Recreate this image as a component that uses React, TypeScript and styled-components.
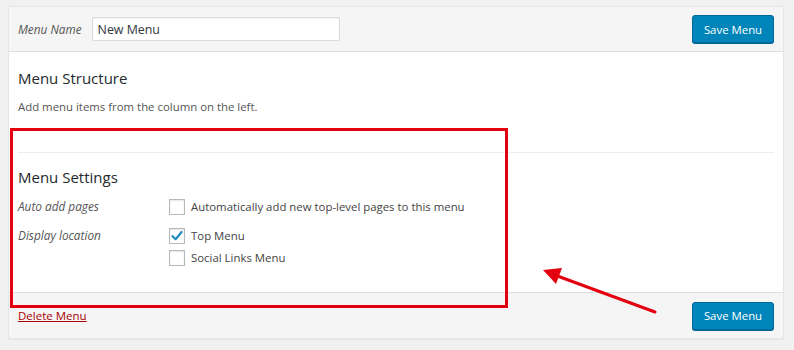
import React from "react";
import styled, { createGlobalStyle } from "styled-components";

const Global = createGlobalStyle`
  html, body { margin: 0; padding: 0; background: #f1f1f1; }
  body { font-family: "Open Sans", "Noto Sans", sans-serif; color: #23282d; font-size: 13px; }
`;

const Page = styled.div`
  position: relative;
  width: 794px;
  height: 350px;
  padding: 6px 10px 0 8px;
  box-sizing: border-box;
`;

const Panel = styled.div`
  border: 1px solid #e5e5e5;
  background: #fff;
  box-shadow: 0 1px 1px rgba(0,0,0,0.04);
  display: flex;
  flex-direction: column;
`;

const Bar = styled.div<{ $top?: boolean }>`
  background: #f5f5f5;
  display: flex;
  align-items: center;
  justify-content: space-between;
  padding: 0 9px;
  height: ${(p) => (p.$top ? "44px" : "45px")};
  border-${(p) => (p.$top ? "bottom" : "top")}: 1px solid #dedede;
`;

const NameGroup = styled.label`
  display: flex;
  align-items: center;
  gap: 10px;
`;

const ItalicLabel = styled.span`
  font-style: italic;
  color: #555;
  font-size: 11.8px;
`;

const NameInput = styled.input`
  width: 248px;
  height: 24px;
  box-sizing: border-box;
  border: 1px solid #ddd;
  box-shadow: inset 0 1px 2px rgba(0,0,0,0.07);
  padding: 0 5px;
  font-family: inherit;
  font-size: 12.4px;
  color: #32373c;
  background: #fff;
  outline: none;
`;

const Button = styled.button`
  width: 82px;
  height: 28px;
  background: #0085ba;
  border: 1px solid #006799;
  border-radius: 3px;
  box-shadow: 0 1px 0 #006799;
  color: #fff;
  font-family: inherit;
  font-size: 11.4px;
  padding: 0;
  cursor: pointer;
`;

const Body = styled.div`
  padding: 16px 9px 0;
  height: 240px;
  box-sizing: border-box;
  display: flex;
  flex-direction: column;
`;

const Heading = styled.h3`
  margin: 0;
  font-size: 15px;
  font-weight: 400;
  color: #23282d;
  line-height: 20px;
`;

const Desc = styled.p`
  margin: 10px 0 0;
  font-size: 11.4px;
  color: #555;
  line-height: 18px;
`;

const Divider = styled.hr`
  margin: 36px 0 0;
  border: 0;
  border-top: 1px solid #eee;
`;

const SettingsHeading = styled(Heading)`
  margin-top: 14px;
`;

const Settings = styled.div`
  margin-top: 11px;
  display: grid;
  grid-template-columns: 151px 1fr;
  row-gap: 12px;
  align-items: start;
`;

const Options = styled.div`
  display: flex;
  flex-direction: column;
  gap: 5px;
`;

const Option = styled.label`
  display: flex;
  align-items: center;
  gap: 6px;
  font-size: 11.4px;
  color: #444;
  line-height: 17px;
`;

const Box = styled.span`
  width: 16px;
  height: 16px;
  box-sizing: border-box;
  border: 1px solid #b4b9be;
  background: #fff;
  box-shadow: inset 0 1px 2px rgba(0,0,0,0.1);
  display: flex;
  align-items: center;
  justify-content: center;
`;

const DeleteLink = styled.a`
  color: #a00;
  text-decoration: underline;
  font-size: 11.5px;
`;

const Highlight = styled.div`
  position: absolute;
  left: 10px;
  top: 128px;
  width: 498px;
  height: 180px;
  box-sizing: border-box;
  border: 3px solid #e3000f;
  pointer-events: none;
`;

const Arrow = styled.svg`
  position: absolute;
  left: 530px;
  top: 258px;
  pointer-events: none;
`;

const Check = ({ checked }: { checked?: boolean }) => (
  <Box>
    {checked && (
      <svg width="14" height="14" viewBox="0 0 14 14">
        <path d="M2.5 7.2 L5.6 10.2 L11.6 3" fill="none" stroke="#1e8cbe" strokeWidth="2.2" strokeLinecap="round" strokeLinejoin="round" />
      </svg>
    )}
  </Box>
);

export default function App() {
  return (
    <Page>
      <Global />
      <Panel>
        <Bar $top>
          <NameGroup>
            <ItalicLabel>Menu Name</ItalicLabel>
            <NameInput defaultValue="New Menu" />
          </NameGroup>
          <Button>Save Menu</Button>
        </Bar>
        <Body>
          <Heading>Menu Structure</Heading>
          <Desc>Add menu items from the column on the left.</Desc>
          <Divider />
          <SettingsHeading>Menu Settings</SettingsHeading>
          <Settings>
            <ItalicLabel>Auto add pages</ItalicLabel>
            <Options>
              <Option>
                <Check />
                Automatically add new top-level pages to this menu
              </Option>
            </Options>
            <ItalicLabel>Display location</ItalicLabel>
            <Options>
              <Option>
                <Check checked />
                Top Menu
              </Option>
              <Option>
                <Check />
                Social Links Menu
              </Option>
            </Options>
          </Settings>
        </Body>
        <Bar>
          <DeleteLink href="#">Delete Menu</DeleteLink>
          <Button>Save Menu</Button>
        </Bar>
      </Panel>
      <Highlight />
      <Arrow width="140" height="70" viewBox="0 0 140 70">
        <line x1="125" y1="54" x2="22" y2="16" stroke="#e3000f" strokeWidth="3" strokeLinecap="round" />
        <polygon points="13,12 32,10 26,26" fill="#e3000f" />
      </Arrow>
    </Page>
  );
}
